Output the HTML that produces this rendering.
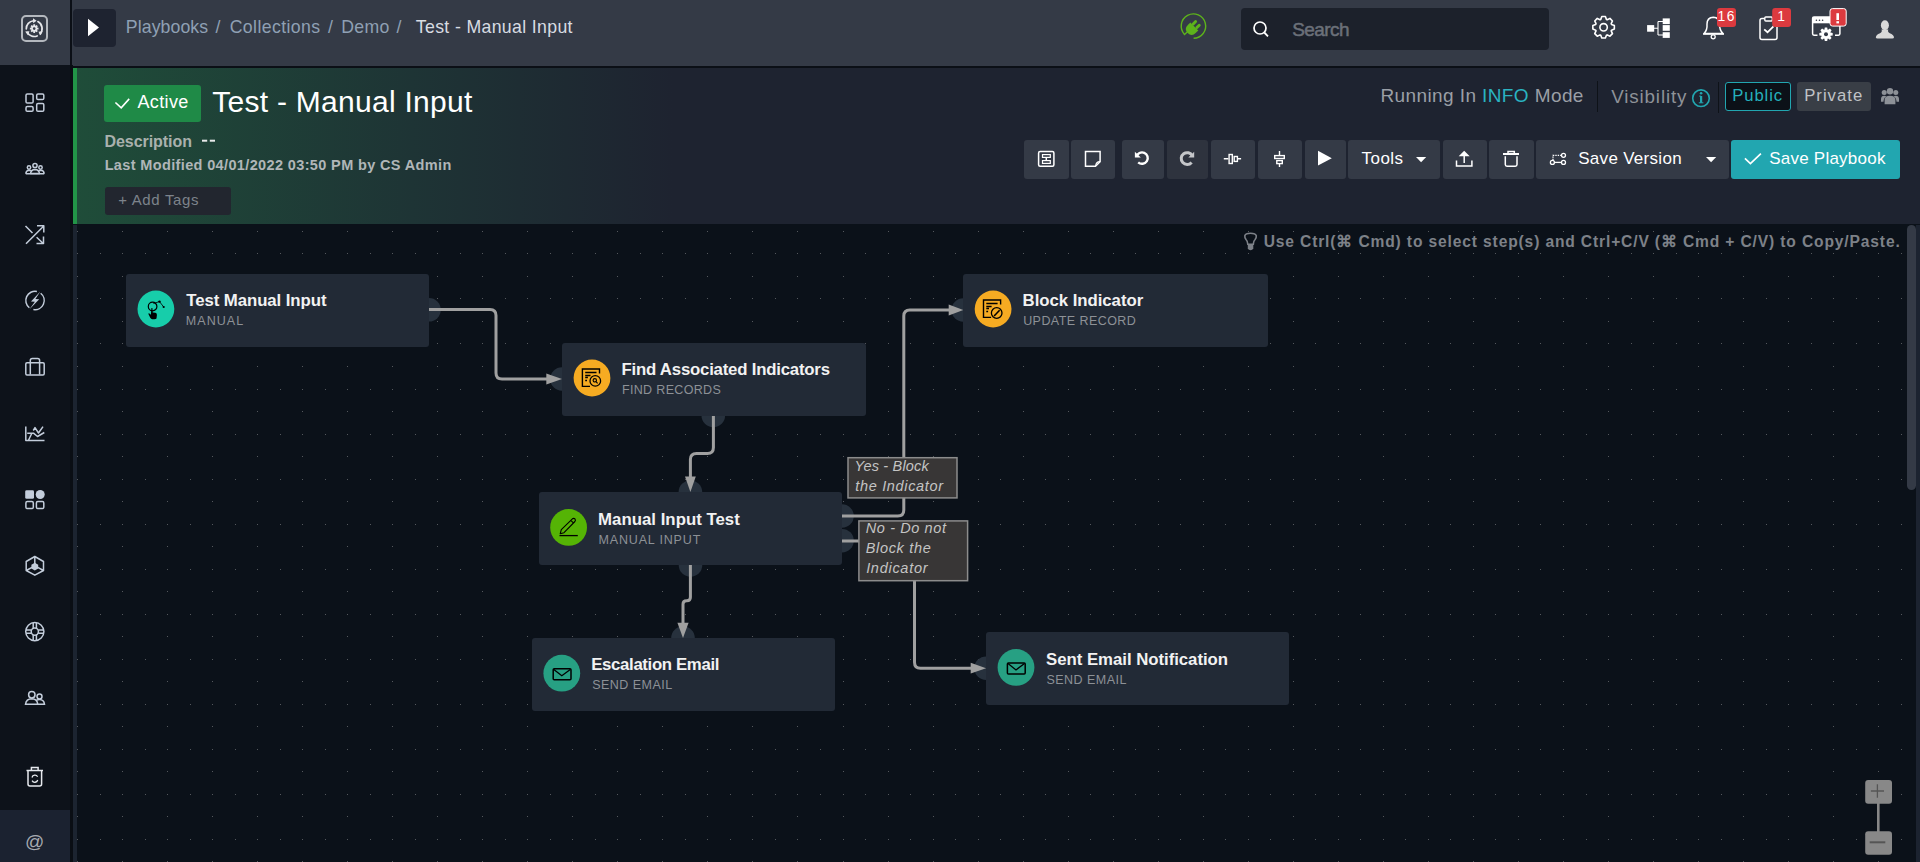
<!DOCTYPE html>
<html><head><meta charset="utf-8">
<style>
*{margin:0;padding:0;box-sizing:border-box}
html,body{width:1920px;height:862px;overflow:hidden;background:#0b1119;font-family:"Liberation Sans",sans-serif}
.a{position:absolute}
svg{position:absolute;left:0;top:0;overflow:visible}
</style></head><body>
<div class="a" style="left:0;top:0;width:1920px;height:68px;background:#343a46"></div>
<div class="a" style="left:72px;top:66px;width:1848px;height:2px;background:#0b0f16"></div>
<div class="a" style="left:70px;top:0;width:2px;height:68px;background:#0b0f16"></div>
<div class="a" style="left:0;top:65px;width:70px;height:797px;background:#0d121a"></div>
<div class="a" style="left:70px;top:65px;width:3px;height:797px;background:#0a0e14"></div>
<div class="a" style="left:0;top:810px;width:70px;height:52px;background:#1b2230"></div>
<div class="a" style="left:73px;top:68px;width:1847px;height:156px;background:linear-gradient(to right,#1f4d39 0px,#1e3435 340px,#1e2330 600px)"></div>
<div class="a" style="left:73px;top:68px;width:4px;height:156px;background:#229447"></div>
<div class="a" style="left:73px;top:225px;width:4px;height:637px;background:#1c2430"></div>
<div class="a" style="left:77px;top:225px;width:1839px;height:637px;background-color:#0b1119"></div>
<div class="a" style="left:1916px;top:225px;width:4px;height:637px;background:#1c2330"></div>
<div class="a" style="left:1907px;top:225px;width:9px;height:265px;background:#343a46;border-radius:5px"></div>
<svg width="1920" height="862" shape-rendering="crispEdges"><path fill="#55585d" d="M77 231h1v1h-1zM122 231h1v1h-1zM167 231h1v1h-1zM212 231h1v1h-1zM257 231h1v1h-1zM302 231h1v1h-1zM347 231h1v1h-1zM392 231h1v1h-1zM437 231h1v1h-1zM482 231h1v1h-1zM527 231h1v1h-1zM572 231h1v1h-1zM617 231h1v1h-1zM662 231h1v1h-1zM707 231h1v1h-1zM752 231h1v1h-1zM797 231h1v1h-1zM843 231h1v1h-1zM888 231h1v1h-1zM933 231h1v1h-1zM978 231h1v1h-1zM1023 231h1v1h-1zM1068 231h1v1h-1zM1113 231h1v1h-1zM1158 231h1v1h-1zM1203 231h1v1h-1zM1248 231h1v1h-1zM1293 231h1v1h-1zM1338 231h1v1h-1zM1383 231h1v1h-1zM1428 231h1v1h-1zM1473 231h1v1h-1zM1518 231h1v1h-1zM1563 231h1v1h-1zM1608 231h1v1h-1zM1653 231h1v1h-1zM1698 231h1v1h-1zM1743 231h1v1h-1zM1788 231h1v1h-1zM1833 231h1v1h-1zM1878 231h1v1h-1zM77 253h1v1h-1zM100 253h1v1h-1zM122 253h1v1h-1zM145 253h1v1h-1zM167 253h1v1h-1zM190 253h1v1h-1zM212 253h1v1h-1zM235 253h1v1h-1zM257 253h1v1h-1zM280 253h1v1h-1zM302 253h1v1h-1zM325 253h1v1h-1zM347 253h1v1h-1zM370 253h1v1h-1zM392 253h1v1h-1zM415 253h1v1h-1zM437 253h1v1h-1zM460 253h1v1h-1zM482 253h1v1h-1zM505 253h1v1h-1zM527 253h1v1h-1zM550 253h1v1h-1zM572 253h1v1h-1zM595 253h1v1h-1zM617 253h1v1h-1zM640 253h1v1h-1zM662 253h1v1h-1zM685 253h1v1h-1zM707 253h1v1h-1zM730 253h1v1h-1zM752 253h1v1h-1zM775 253h1v1h-1zM797 253h1v1h-1zM820 253h1v1h-1zM843 253h1v1h-1zM865 253h1v1h-1zM888 253h1v1h-1zM910 253h1v1h-1zM933 253h1v1h-1zM955 253h1v1h-1zM978 253h1v1h-1zM1000 253h1v1h-1zM1023 253h1v1h-1zM1045 253h1v1h-1zM1068 253h1v1h-1zM1090 253h1v1h-1zM1113 253h1v1h-1zM1135 253h1v1h-1zM1158 253h1v1h-1zM1180 253h1v1h-1zM1203 253h1v1h-1zM1225 253h1v1h-1zM1248 253h1v1h-1zM1270 253h1v1h-1zM1293 253h1v1h-1zM1315 253h1v1h-1zM1338 253h1v1h-1zM1360 253h1v1h-1zM1383 253h1v1h-1zM1405 253h1v1h-1zM1428 253h1v1h-1zM1450 253h1v1h-1zM1473 253h1v1h-1zM1495 253h1v1h-1zM1518 253h1v1h-1zM1540 253h1v1h-1zM1563 253h1v1h-1zM1586 253h1v1h-1zM1608 253h1v1h-1zM1631 253h1v1h-1zM1653 253h1v1h-1zM1676 253h1v1h-1zM1698 253h1v1h-1zM1721 253h1v1h-1zM1743 253h1v1h-1zM1766 253h1v1h-1zM1788 253h1v1h-1zM1811 253h1v1h-1zM1833 253h1v1h-1zM1856 253h1v1h-1zM1878 253h1v1h-1zM1901 253h1v1h-1zM77 276h1v1h-1zM122 276h1v1h-1zM167 276h1v1h-1zM212 276h1v1h-1zM257 276h1v1h-1zM302 276h1v1h-1zM347 276h1v1h-1zM392 276h1v1h-1zM437 276h1v1h-1zM482 276h1v1h-1zM527 276h1v1h-1zM572 276h1v1h-1zM617 276h1v1h-1zM662 276h1v1h-1zM707 276h1v1h-1zM752 276h1v1h-1zM797 276h1v1h-1zM843 276h1v1h-1zM888 276h1v1h-1zM933 276h1v1h-1zM978 276h1v1h-1zM1023 276h1v1h-1zM1068 276h1v1h-1zM1113 276h1v1h-1zM1158 276h1v1h-1zM1203 276h1v1h-1zM1248 276h1v1h-1zM1293 276h1v1h-1zM1338 276h1v1h-1zM1383 276h1v1h-1zM1428 276h1v1h-1zM1473 276h1v1h-1zM1518 276h1v1h-1zM1563 276h1v1h-1zM1608 276h1v1h-1zM1653 276h1v1h-1zM1698 276h1v1h-1zM1743 276h1v1h-1zM1788 276h1v1h-1zM1833 276h1v1h-1zM1878 276h1v1h-1zM77 298h1v1h-1zM100 298h1v1h-1zM122 298h1v1h-1zM145 298h1v1h-1zM167 298h1v1h-1zM190 298h1v1h-1zM212 298h1v1h-1zM235 298h1v1h-1zM257 298h1v1h-1zM280 298h1v1h-1zM302 298h1v1h-1zM325 298h1v1h-1zM347 298h1v1h-1zM370 298h1v1h-1zM392 298h1v1h-1zM415 298h1v1h-1zM437 298h1v1h-1zM460 298h1v1h-1zM482 298h1v1h-1zM505 298h1v1h-1zM527 298h1v1h-1zM550 298h1v1h-1zM572 298h1v1h-1zM595 298h1v1h-1zM617 298h1v1h-1zM640 298h1v1h-1zM662 298h1v1h-1zM685 298h1v1h-1zM707 298h1v1h-1zM730 298h1v1h-1zM752 298h1v1h-1zM775 298h1v1h-1zM797 298h1v1h-1zM820 298h1v1h-1zM843 298h1v1h-1zM865 298h1v1h-1zM888 298h1v1h-1zM910 298h1v1h-1zM933 298h1v1h-1zM955 298h1v1h-1zM978 298h1v1h-1zM1000 298h1v1h-1zM1023 298h1v1h-1zM1045 298h1v1h-1zM1068 298h1v1h-1zM1090 298h1v1h-1zM1113 298h1v1h-1zM1135 298h1v1h-1zM1158 298h1v1h-1zM1180 298h1v1h-1zM1203 298h1v1h-1zM1225 298h1v1h-1zM1248 298h1v1h-1zM1270 298h1v1h-1zM1293 298h1v1h-1zM1315 298h1v1h-1zM1338 298h1v1h-1zM1360 298h1v1h-1zM1383 298h1v1h-1zM1405 298h1v1h-1zM1428 298h1v1h-1zM1450 298h1v1h-1zM1473 298h1v1h-1zM1495 298h1v1h-1zM1518 298h1v1h-1zM1540 298h1v1h-1zM1563 298h1v1h-1zM1586 298h1v1h-1zM1608 298h1v1h-1zM1631 298h1v1h-1zM1653 298h1v1h-1zM1676 298h1v1h-1zM1698 298h1v1h-1zM1721 298h1v1h-1zM1743 298h1v1h-1zM1766 298h1v1h-1zM1788 298h1v1h-1zM1811 298h1v1h-1zM1833 298h1v1h-1zM1856 298h1v1h-1zM1878 298h1v1h-1zM1901 298h1v1h-1zM77 321h1v1h-1zM122 321h1v1h-1zM167 321h1v1h-1zM212 321h1v1h-1zM257 321h1v1h-1zM302 321h1v1h-1zM347 321h1v1h-1zM392 321h1v1h-1zM437 321h1v1h-1zM482 321h1v1h-1zM527 321h1v1h-1zM572 321h1v1h-1zM617 321h1v1h-1zM662 321h1v1h-1zM707 321h1v1h-1zM752 321h1v1h-1zM797 321h1v1h-1zM843 321h1v1h-1zM888 321h1v1h-1zM933 321h1v1h-1zM978 321h1v1h-1zM1023 321h1v1h-1zM1068 321h1v1h-1zM1113 321h1v1h-1zM1158 321h1v1h-1zM1203 321h1v1h-1zM1248 321h1v1h-1zM1293 321h1v1h-1zM1338 321h1v1h-1zM1383 321h1v1h-1zM1428 321h1v1h-1zM1473 321h1v1h-1zM1518 321h1v1h-1zM1563 321h1v1h-1zM1608 321h1v1h-1zM1653 321h1v1h-1zM1698 321h1v1h-1zM1743 321h1v1h-1zM1788 321h1v1h-1zM1833 321h1v1h-1zM1878 321h1v1h-1zM77 343h1v1h-1zM100 343h1v1h-1zM122 343h1v1h-1zM145 343h1v1h-1zM167 343h1v1h-1zM190 343h1v1h-1zM212 343h1v1h-1zM235 343h1v1h-1zM257 343h1v1h-1zM280 343h1v1h-1zM302 343h1v1h-1zM325 343h1v1h-1zM347 343h1v1h-1zM370 343h1v1h-1zM392 343h1v1h-1zM415 343h1v1h-1zM437 343h1v1h-1zM460 343h1v1h-1zM482 343h1v1h-1zM505 343h1v1h-1zM527 343h1v1h-1zM550 343h1v1h-1zM572 343h1v1h-1zM595 343h1v1h-1zM617 343h1v1h-1zM640 343h1v1h-1zM662 343h1v1h-1zM685 343h1v1h-1zM707 343h1v1h-1zM730 343h1v1h-1zM752 343h1v1h-1zM775 343h1v1h-1zM797 343h1v1h-1zM820 343h1v1h-1zM843 343h1v1h-1zM865 343h1v1h-1zM888 343h1v1h-1zM910 343h1v1h-1zM933 343h1v1h-1zM955 343h1v1h-1zM978 343h1v1h-1zM1000 343h1v1h-1zM1023 343h1v1h-1zM1045 343h1v1h-1zM1068 343h1v1h-1zM1090 343h1v1h-1zM1113 343h1v1h-1zM1135 343h1v1h-1zM1158 343h1v1h-1zM1180 343h1v1h-1zM1203 343h1v1h-1zM1225 343h1v1h-1zM1248 343h1v1h-1zM1270 343h1v1h-1zM1293 343h1v1h-1zM1315 343h1v1h-1zM1338 343h1v1h-1zM1360 343h1v1h-1zM1383 343h1v1h-1zM1405 343h1v1h-1zM1428 343h1v1h-1zM1450 343h1v1h-1zM1473 343h1v1h-1zM1495 343h1v1h-1zM1518 343h1v1h-1zM1540 343h1v1h-1zM1563 343h1v1h-1zM1586 343h1v1h-1zM1608 343h1v1h-1zM1631 343h1v1h-1zM1653 343h1v1h-1zM1676 343h1v1h-1zM1698 343h1v1h-1zM1721 343h1v1h-1zM1743 343h1v1h-1zM1766 343h1v1h-1zM1788 343h1v1h-1zM1811 343h1v1h-1zM1833 343h1v1h-1zM1856 343h1v1h-1zM1878 343h1v1h-1zM1901 343h1v1h-1zM77 366h1v1h-1zM122 366h1v1h-1zM167 366h1v1h-1zM212 366h1v1h-1zM257 366h1v1h-1zM302 366h1v1h-1zM347 366h1v1h-1zM392 366h1v1h-1zM437 366h1v1h-1zM482 366h1v1h-1zM527 366h1v1h-1zM572 366h1v1h-1zM617 366h1v1h-1zM662 366h1v1h-1zM707 366h1v1h-1zM752 366h1v1h-1zM797 366h1v1h-1zM843 366h1v1h-1zM888 366h1v1h-1zM933 366h1v1h-1zM978 366h1v1h-1zM1023 366h1v1h-1zM1068 366h1v1h-1zM1113 366h1v1h-1zM1158 366h1v1h-1zM1203 366h1v1h-1zM1248 366h1v1h-1zM1293 366h1v1h-1zM1338 366h1v1h-1zM1383 366h1v1h-1zM1428 366h1v1h-1zM1473 366h1v1h-1zM1518 366h1v1h-1zM1563 366h1v1h-1zM1608 366h1v1h-1zM1653 366h1v1h-1zM1698 366h1v1h-1zM1743 366h1v1h-1zM1788 366h1v1h-1zM1833 366h1v1h-1zM1878 366h1v1h-1zM77 389h1v1h-1zM100 389h1v1h-1zM122 389h1v1h-1zM145 389h1v1h-1zM167 389h1v1h-1zM190 389h1v1h-1zM212 389h1v1h-1zM235 389h1v1h-1zM257 389h1v1h-1zM280 389h1v1h-1zM302 389h1v1h-1zM325 389h1v1h-1zM347 389h1v1h-1zM370 389h1v1h-1zM392 389h1v1h-1zM415 389h1v1h-1zM437 389h1v1h-1zM460 389h1v1h-1zM482 389h1v1h-1zM505 389h1v1h-1zM527 389h1v1h-1zM550 389h1v1h-1zM572 389h1v1h-1zM595 389h1v1h-1zM617 389h1v1h-1zM640 389h1v1h-1zM662 389h1v1h-1zM685 389h1v1h-1zM707 389h1v1h-1zM730 389h1v1h-1zM752 389h1v1h-1zM775 389h1v1h-1zM797 389h1v1h-1zM820 389h1v1h-1zM843 389h1v1h-1zM865 389h1v1h-1zM888 389h1v1h-1zM910 389h1v1h-1zM933 389h1v1h-1zM955 389h1v1h-1zM978 389h1v1h-1zM1000 389h1v1h-1zM1023 389h1v1h-1zM1045 389h1v1h-1zM1068 389h1v1h-1zM1090 389h1v1h-1zM1113 389h1v1h-1zM1135 389h1v1h-1zM1158 389h1v1h-1zM1180 389h1v1h-1zM1203 389h1v1h-1zM1225 389h1v1h-1zM1248 389h1v1h-1zM1270 389h1v1h-1zM1293 389h1v1h-1zM1315 389h1v1h-1zM1338 389h1v1h-1zM1360 389h1v1h-1zM1383 389h1v1h-1zM1405 389h1v1h-1zM1428 389h1v1h-1zM1450 389h1v1h-1zM1473 389h1v1h-1zM1495 389h1v1h-1zM1518 389h1v1h-1zM1540 389h1v1h-1zM1563 389h1v1h-1zM1586 389h1v1h-1zM1608 389h1v1h-1zM1631 389h1v1h-1zM1653 389h1v1h-1zM1676 389h1v1h-1zM1698 389h1v1h-1zM1721 389h1v1h-1zM1743 389h1v1h-1zM1766 389h1v1h-1zM1788 389h1v1h-1zM1811 389h1v1h-1zM1833 389h1v1h-1zM1856 389h1v1h-1zM1878 389h1v1h-1zM1901 389h1v1h-1zM77 411h1v1h-1zM122 411h1v1h-1zM167 411h1v1h-1zM212 411h1v1h-1zM257 411h1v1h-1zM302 411h1v1h-1zM347 411h1v1h-1zM392 411h1v1h-1zM437 411h1v1h-1zM482 411h1v1h-1zM527 411h1v1h-1zM572 411h1v1h-1zM617 411h1v1h-1zM662 411h1v1h-1zM707 411h1v1h-1zM752 411h1v1h-1zM797 411h1v1h-1zM843 411h1v1h-1zM888 411h1v1h-1zM933 411h1v1h-1zM978 411h1v1h-1zM1023 411h1v1h-1zM1068 411h1v1h-1zM1113 411h1v1h-1zM1158 411h1v1h-1zM1203 411h1v1h-1zM1248 411h1v1h-1zM1293 411h1v1h-1zM1338 411h1v1h-1zM1383 411h1v1h-1zM1428 411h1v1h-1zM1473 411h1v1h-1zM1518 411h1v1h-1zM1563 411h1v1h-1zM1608 411h1v1h-1zM1653 411h1v1h-1zM1698 411h1v1h-1zM1743 411h1v1h-1zM1788 411h1v1h-1zM1833 411h1v1h-1zM1878 411h1v1h-1zM77 434h1v1h-1zM100 434h1v1h-1zM122 434h1v1h-1zM145 434h1v1h-1zM167 434h1v1h-1zM190 434h1v1h-1zM212 434h1v1h-1zM235 434h1v1h-1zM257 434h1v1h-1zM280 434h1v1h-1zM302 434h1v1h-1zM325 434h1v1h-1zM347 434h1v1h-1zM370 434h1v1h-1zM392 434h1v1h-1zM415 434h1v1h-1zM437 434h1v1h-1zM460 434h1v1h-1zM482 434h1v1h-1zM505 434h1v1h-1zM527 434h1v1h-1zM550 434h1v1h-1zM572 434h1v1h-1zM595 434h1v1h-1zM617 434h1v1h-1zM640 434h1v1h-1zM662 434h1v1h-1zM685 434h1v1h-1zM707 434h1v1h-1zM730 434h1v1h-1zM752 434h1v1h-1zM775 434h1v1h-1zM797 434h1v1h-1zM820 434h1v1h-1zM843 434h1v1h-1zM865 434h1v1h-1zM888 434h1v1h-1zM910 434h1v1h-1zM933 434h1v1h-1zM955 434h1v1h-1zM978 434h1v1h-1zM1000 434h1v1h-1zM1023 434h1v1h-1zM1045 434h1v1h-1zM1068 434h1v1h-1zM1090 434h1v1h-1zM1113 434h1v1h-1zM1135 434h1v1h-1zM1158 434h1v1h-1zM1180 434h1v1h-1zM1203 434h1v1h-1zM1225 434h1v1h-1zM1248 434h1v1h-1zM1270 434h1v1h-1zM1293 434h1v1h-1zM1315 434h1v1h-1zM1338 434h1v1h-1zM1360 434h1v1h-1zM1383 434h1v1h-1zM1405 434h1v1h-1zM1428 434h1v1h-1zM1450 434h1v1h-1zM1473 434h1v1h-1zM1495 434h1v1h-1zM1518 434h1v1h-1zM1540 434h1v1h-1zM1563 434h1v1h-1zM1586 434h1v1h-1zM1608 434h1v1h-1zM1631 434h1v1h-1zM1653 434h1v1h-1zM1676 434h1v1h-1zM1698 434h1v1h-1zM1721 434h1v1h-1zM1743 434h1v1h-1zM1766 434h1v1h-1zM1788 434h1v1h-1zM1811 434h1v1h-1zM1833 434h1v1h-1zM1856 434h1v1h-1zM1878 434h1v1h-1zM1901 434h1v1h-1zM77 456h1v1h-1zM122 456h1v1h-1zM167 456h1v1h-1zM212 456h1v1h-1zM257 456h1v1h-1zM302 456h1v1h-1zM347 456h1v1h-1zM392 456h1v1h-1zM437 456h1v1h-1zM482 456h1v1h-1zM527 456h1v1h-1zM572 456h1v1h-1zM617 456h1v1h-1zM662 456h1v1h-1zM707 456h1v1h-1zM752 456h1v1h-1zM797 456h1v1h-1zM843 456h1v1h-1zM888 456h1v1h-1zM933 456h1v1h-1zM978 456h1v1h-1zM1023 456h1v1h-1zM1068 456h1v1h-1zM1113 456h1v1h-1zM1158 456h1v1h-1zM1203 456h1v1h-1zM1248 456h1v1h-1zM1293 456h1v1h-1zM1338 456h1v1h-1zM1383 456h1v1h-1zM1428 456h1v1h-1zM1473 456h1v1h-1zM1518 456h1v1h-1zM1563 456h1v1h-1zM1608 456h1v1h-1zM1653 456h1v1h-1zM1698 456h1v1h-1zM1743 456h1v1h-1zM1788 456h1v1h-1zM1833 456h1v1h-1zM1878 456h1v1h-1zM77 479h1v1h-1zM100 479h1v1h-1zM122 479h1v1h-1zM145 479h1v1h-1zM167 479h1v1h-1zM190 479h1v1h-1zM212 479h1v1h-1zM235 479h1v1h-1zM257 479h1v1h-1zM280 479h1v1h-1zM302 479h1v1h-1zM325 479h1v1h-1zM347 479h1v1h-1zM370 479h1v1h-1zM392 479h1v1h-1zM415 479h1v1h-1zM437 479h1v1h-1zM460 479h1v1h-1zM482 479h1v1h-1zM505 479h1v1h-1zM527 479h1v1h-1zM550 479h1v1h-1zM572 479h1v1h-1zM595 479h1v1h-1zM617 479h1v1h-1zM640 479h1v1h-1zM662 479h1v1h-1zM685 479h1v1h-1zM707 479h1v1h-1zM730 479h1v1h-1zM752 479h1v1h-1zM775 479h1v1h-1zM797 479h1v1h-1zM820 479h1v1h-1zM843 479h1v1h-1zM865 479h1v1h-1zM888 479h1v1h-1zM910 479h1v1h-1zM933 479h1v1h-1zM955 479h1v1h-1zM978 479h1v1h-1zM1000 479h1v1h-1zM1023 479h1v1h-1zM1045 479h1v1h-1zM1068 479h1v1h-1zM1090 479h1v1h-1zM1113 479h1v1h-1zM1135 479h1v1h-1zM1158 479h1v1h-1zM1180 479h1v1h-1zM1203 479h1v1h-1zM1225 479h1v1h-1zM1248 479h1v1h-1zM1270 479h1v1h-1zM1293 479h1v1h-1zM1315 479h1v1h-1zM1338 479h1v1h-1zM1360 479h1v1h-1zM1383 479h1v1h-1zM1405 479h1v1h-1zM1428 479h1v1h-1zM1450 479h1v1h-1zM1473 479h1v1h-1zM1495 479h1v1h-1zM1518 479h1v1h-1zM1540 479h1v1h-1zM1563 479h1v1h-1zM1586 479h1v1h-1zM1608 479h1v1h-1zM1631 479h1v1h-1zM1653 479h1v1h-1zM1676 479h1v1h-1zM1698 479h1v1h-1zM1721 479h1v1h-1zM1743 479h1v1h-1zM1766 479h1v1h-1zM1788 479h1v1h-1zM1811 479h1v1h-1zM1833 479h1v1h-1zM1856 479h1v1h-1zM1878 479h1v1h-1zM1901 479h1v1h-1zM77 501h1v1h-1zM122 501h1v1h-1zM167 501h1v1h-1zM212 501h1v1h-1zM257 501h1v1h-1zM302 501h1v1h-1zM347 501h1v1h-1zM392 501h1v1h-1zM437 501h1v1h-1zM482 501h1v1h-1zM527 501h1v1h-1zM572 501h1v1h-1zM617 501h1v1h-1zM662 501h1v1h-1zM707 501h1v1h-1zM752 501h1v1h-1zM797 501h1v1h-1zM843 501h1v1h-1zM888 501h1v1h-1zM933 501h1v1h-1zM978 501h1v1h-1zM1023 501h1v1h-1zM1068 501h1v1h-1zM1113 501h1v1h-1zM1158 501h1v1h-1zM1203 501h1v1h-1zM1248 501h1v1h-1zM1293 501h1v1h-1zM1338 501h1v1h-1zM1383 501h1v1h-1zM1428 501h1v1h-1zM1473 501h1v1h-1zM1518 501h1v1h-1zM1563 501h1v1h-1zM1608 501h1v1h-1zM1653 501h1v1h-1zM1698 501h1v1h-1zM1743 501h1v1h-1zM1788 501h1v1h-1zM1833 501h1v1h-1zM1878 501h1v1h-1zM77 524h1v1h-1zM100 524h1v1h-1zM122 524h1v1h-1zM145 524h1v1h-1zM167 524h1v1h-1zM190 524h1v1h-1zM212 524h1v1h-1zM235 524h1v1h-1zM257 524h1v1h-1zM280 524h1v1h-1zM302 524h1v1h-1zM325 524h1v1h-1zM347 524h1v1h-1zM370 524h1v1h-1zM392 524h1v1h-1zM415 524h1v1h-1zM437 524h1v1h-1zM460 524h1v1h-1zM482 524h1v1h-1zM505 524h1v1h-1zM527 524h1v1h-1zM550 524h1v1h-1zM572 524h1v1h-1zM595 524h1v1h-1zM617 524h1v1h-1zM640 524h1v1h-1zM662 524h1v1h-1zM685 524h1v1h-1zM707 524h1v1h-1zM730 524h1v1h-1zM752 524h1v1h-1zM775 524h1v1h-1zM797 524h1v1h-1zM820 524h1v1h-1zM843 524h1v1h-1zM865 524h1v1h-1zM888 524h1v1h-1zM910 524h1v1h-1zM933 524h1v1h-1zM955 524h1v1h-1zM978 524h1v1h-1zM1000 524h1v1h-1zM1023 524h1v1h-1zM1045 524h1v1h-1zM1068 524h1v1h-1zM1090 524h1v1h-1zM1113 524h1v1h-1zM1135 524h1v1h-1zM1158 524h1v1h-1zM1180 524h1v1h-1zM1203 524h1v1h-1zM1225 524h1v1h-1zM1248 524h1v1h-1zM1270 524h1v1h-1zM1293 524h1v1h-1zM1315 524h1v1h-1zM1338 524h1v1h-1zM1360 524h1v1h-1zM1383 524h1v1h-1zM1405 524h1v1h-1zM1428 524h1v1h-1zM1450 524h1v1h-1zM1473 524h1v1h-1zM1495 524h1v1h-1zM1518 524h1v1h-1zM1540 524h1v1h-1zM1563 524h1v1h-1zM1586 524h1v1h-1zM1608 524h1v1h-1zM1631 524h1v1h-1zM1653 524h1v1h-1zM1676 524h1v1h-1zM1698 524h1v1h-1zM1721 524h1v1h-1zM1743 524h1v1h-1zM1766 524h1v1h-1zM1788 524h1v1h-1zM1811 524h1v1h-1zM1833 524h1v1h-1zM1856 524h1v1h-1zM1878 524h1v1h-1zM1901 524h1v1h-1zM77 546h1v1h-1zM122 546h1v1h-1zM167 546h1v1h-1zM212 546h1v1h-1zM257 546h1v1h-1zM302 546h1v1h-1zM347 546h1v1h-1zM392 546h1v1h-1zM437 546h1v1h-1zM482 546h1v1h-1zM527 546h1v1h-1zM572 546h1v1h-1zM617 546h1v1h-1zM662 546h1v1h-1zM707 546h1v1h-1zM752 546h1v1h-1zM797 546h1v1h-1zM843 546h1v1h-1zM888 546h1v1h-1zM933 546h1v1h-1zM978 546h1v1h-1zM1023 546h1v1h-1zM1068 546h1v1h-1zM1113 546h1v1h-1zM1158 546h1v1h-1zM1203 546h1v1h-1zM1248 546h1v1h-1zM1293 546h1v1h-1zM1338 546h1v1h-1zM1383 546h1v1h-1zM1428 546h1v1h-1zM1473 546h1v1h-1zM1518 546h1v1h-1zM1563 546h1v1h-1zM1608 546h1v1h-1zM1653 546h1v1h-1zM1698 546h1v1h-1zM1743 546h1v1h-1zM1788 546h1v1h-1zM1833 546h1v1h-1zM1878 546h1v1h-1zM77 569h1v1h-1zM100 569h1v1h-1zM122 569h1v1h-1zM145 569h1v1h-1zM167 569h1v1h-1zM190 569h1v1h-1zM212 569h1v1h-1zM235 569h1v1h-1zM257 569h1v1h-1zM280 569h1v1h-1zM302 569h1v1h-1zM325 569h1v1h-1zM347 569h1v1h-1zM370 569h1v1h-1zM392 569h1v1h-1zM415 569h1v1h-1zM437 569h1v1h-1zM460 569h1v1h-1zM482 569h1v1h-1zM505 569h1v1h-1zM527 569h1v1h-1zM550 569h1v1h-1zM572 569h1v1h-1zM595 569h1v1h-1zM617 569h1v1h-1zM640 569h1v1h-1zM662 569h1v1h-1zM685 569h1v1h-1zM707 569h1v1h-1zM730 569h1v1h-1zM752 569h1v1h-1zM775 569h1v1h-1zM797 569h1v1h-1zM820 569h1v1h-1zM843 569h1v1h-1zM865 569h1v1h-1zM888 569h1v1h-1zM910 569h1v1h-1zM933 569h1v1h-1zM955 569h1v1h-1zM978 569h1v1h-1zM1000 569h1v1h-1zM1023 569h1v1h-1zM1045 569h1v1h-1zM1068 569h1v1h-1zM1090 569h1v1h-1zM1113 569h1v1h-1zM1135 569h1v1h-1zM1158 569h1v1h-1zM1180 569h1v1h-1zM1203 569h1v1h-1zM1225 569h1v1h-1zM1248 569h1v1h-1zM1270 569h1v1h-1zM1293 569h1v1h-1zM1315 569h1v1h-1zM1338 569h1v1h-1zM1360 569h1v1h-1zM1383 569h1v1h-1zM1405 569h1v1h-1zM1428 569h1v1h-1zM1450 569h1v1h-1zM1473 569h1v1h-1zM1495 569h1v1h-1zM1518 569h1v1h-1zM1540 569h1v1h-1zM1563 569h1v1h-1zM1586 569h1v1h-1zM1608 569h1v1h-1zM1631 569h1v1h-1zM1653 569h1v1h-1zM1676 569h1v1h-1zM1698 569h1v1h-1zM1721 569h1v1h-1zM1743 569h1v1h-1zM1766 569h1v1h-1zM1788 569h1v1h-1zM1811 569h1v1h-1zM1833 569h1v1h-1zM1856 569h1v1h-1zM1878 569h1v1h-1zM1901 569h1v1h-1zM77 591h1v1h-1zM122 591h1v1h-1zM167 591h1v1h-1zM212 591h1v1h-1zM257 591h1v1h-1zM302 591h1v1h-1zM347 591h1v1h-1zM392 591h1v1h-1zM437 591h1v1h-1zM482 591h1v1h-1zM527 591h1v1h-1zM572 591h1v1h-1zM617 591h1v1h-1zM662 591h1v1h-1zM707 591h1v1h-1zM752 591h1v1h-1zM797 591h1v1h-1zM843 591h1v1h-1zM888 591h1v1h-1zM933 591h1v1h-1zM978 591h1v1h-1zM1023 591h1v1h-1zM1068 591h1v1h-1zM1113 591h1v1h-1zM1158 591h1v1h-1zM1203 591h1v1h-1zM1248 591h1v1h-1zM1293 591h1v1h-1zM1338 591h1v1h-1zM1383 591h1v1h-1zM1428 591h1v1h-1zM1473 591h1v1h-1zM1518 591h1v1h-1zM1563 591h1v1h-1zM1608 591h1v1h-1zM1653 591h1v1h-1zM1698 591h1v1h-1zM1743 591h1v1h-1zM1788 591h1v1h-1zM1833 591h1v1h-1zM1878 591h1v1h-1zM77 614h1v1h-1zM100 614h1v1h-1zM122 614h1v1h-1zM145 614h1v1h-1zM167 614h1v1h-1zM190 614h1v1h-1zM212 614h1v1h-1zM235 614h1v1h-1zM257 614h1v1h-1zM280 614h1v1h-1zM302 614h1v1h-1zM325 614h1v1h-1zM347 614h1v1h-1zM370 614h1v1h-1zM392 614h1v1h-1zM415 614h1v1h-1zM437 614h1v1h-1zM460 614h1v1h-1zM482 614h1v1h-1zM505 614h1v1h-1zM527 614h1v1h-1zM550 614h1v1h-1zM572 614h1v1h-1zM595 614h1v1h-1zM617 614h1v1h-1zM640 614h1v1h-1zM662 614h1v1h-1zM685 614h1v1h-1zM707 614h1v1h-1zM730 614h1v1h-1zM752 614h1v1h-1zM775 614h1v1h-1zM797 614h1v1h-1zM820 614h1v1h-1zM843 614h1v1h-1zM865 614h1v1h-1zM888 614h1v1h-1zM910 614h1v1h-1zM933 614h1v1h-1zM955 614h1v1h-1zM978 614h1v1h-1zM1000 614h1v1h-1zM1023 614h1v1h-1zM1045 614h1v1h-1zM1068 614h1v1h-1zM1090 614h1v1h-1zM1113 614h1v1h-1zM1135 614h1v1h-1zM1158 614h1v1h-1zM1180 614h1v1h-1zM1203 614h1v1h-1zM1225 614h1v1h-1zM1248 614h1v1h-1zM1270 614h1v1h-1zM1293 614h1v1h-1zM1315 614h1v1h-1zM1338 614h1v1h-1zM1360 614h1v1h-1zM1383 614h1v1h-1zM1405 614h1v1h-1zM1428 614h1v1h-1zM1450 614h1v1h-1zM1473 614h1v1h-1zM1495 614h1v1h-1zM1518 614h1v1h-1zM1540 614h1v1h-1zM1563 614h1v1h-1zM1586 614h1v1h-1zM1608 614h1v1h-1zM1631 614h1v1h-1zM1653 614h1v1h-1zM1676 614h1v1h-1zM1698 614h1v1h-1zM1721 614h1v1h-1zM1743 614h1v1h-1zM1766 614h1v1h-1zM1788 614h1v1h-1zM1811 614h1v1h-1zM1833 614h1v1h-1zM1856 614h1v1h-1zM1878 614h1v1h-1zM1901 614h1v1h-1zM77 636h1v1h-1zM122 636h1v1h-1zM167 636h1v1h-1zM212 636h1v1h-1zM257 636h1v1h-1zM302 636h1v1h-1zM347 636h1v1h-1zM392 636h1v1h-1zM437 636h1v1h-1zM482 636h1v1h-1zM527 636h1v1h-1zM572 636h1v1h-1zM617 636h1v1h-1zM662 636h1v1h-1zM707 636h1v1h-1zM752 636h1v1h-1zM797 636h1v1h-1zM843 636h1v1h-1zM888 636h1v1h-1zM933 636h1v1h-1zM978 636h1v1h-1zM1023 636h1v1h-1zM1068 636h1v1h-1zM1113 636h1v1h-1zM1158 636h1v1h-1zM1203 636h1v1h-1zM1248 636h1v1h-1zM1293 636h1v1h-1zM1338 636h1v1h-1zM1383 636h1v1h-1zM1428 636h1v1h-1zM1473 636h1v1h-1zM1518 636h1v1h-1zM1563 636h1v1h-1zM1608 636h1v1h-1zM1653 636h1v1h-1zM1698 636h1v1h-1zM1743 636h1v1h-1zM1788 636h1v1h-1zM1833 636h1v1h-1zM1878 636h1v1h-1zM77 659h1v1h-1zM100 659h1v1h-1zM122 659h1v1h-1zM145 659h1v1h-1zM167 659h1v1h-1zM190 659h1v1h-1zM212 659h1v1h-1zM235 659h1v1h-1zM257 659h1v1h-1zM280 659h1v1h-1zM302 659h1v1h-1zM325 659h1v1h-1zM347 659h1v1h-1zM370 659h1v1h-1zM392 659h1v1h-1zM415 659h1v1h-1zM437 659h1v1h-1zM460 659h1v1h-1zM482 659h1v1h-1zM505 659h1v1h-1zM527 659h1v1h-1zM550 659h1v1h-1zM572 659h1v1h-1zM595 659h1v1h-1zM617 659h1v1h-1zM640 659h1v1h-1zM662 659h1v1h-1zM685 659h1v1h-1zM707 659h1v1h-1zM730 659h1v1h-1zM752 659h1v1h-1zM775 659h1v1h-1zM797 659h1v1h-1zM820 659h1v1h-1zM843 659h1v1h-1zM865 659h1v1h-1zM888 659h1v1h-1zM910 659h1v1h-1zM933 659h1v1h-1zM955 659h1v1h-1zM978 659h1v1h-1zM1000 659h1v1h-1zM1023 659h1v1h-1zM1045 659h1v1h-1zM1068 659h1v1h-1zM1090 659h1v1h-1zM1113 659h1v1h-1zM1135 659h1v1h-1zM1158 659h1v1h-1zM1180 659h1v1h-1zM1203 659h1v1h-1zM1225 659h1v1h-1zM1248 659h1v1h-1zM1270 659h1v1h-1zM1293 659h1v1h-1zM1315 659h1v1h-1zM1338 659h1v1h-1zM1360 659h1v1h-1zM1383 659h1v1h-1zM1405 659h1v1h-1zM1428 659h1v1h-1zM1450 659h1v1h-1zM1473 659h1v1h-1zM1495 659h1v1h-1zM1518 659h1v1h-1zM1540 659h1v1h-1zM1563 659h1v1h-1zM1586 659h1v1h-1zM1608 659h1v1h-1zM1631 659h1v1h-1zM1653 659h1v1h-1zM1676 659h1v1h-1zM1698 659h1v1h-1zM1721 659h1v1h-1zM1743 659h1v1h-1zM1766 659h1v1h-1zM1788 659h1v1h-1zM1811 659h1v1h-1zM1833 659h1v1h-1zM1856 659h1v1h-1zM1878 659h1v1h-1zM1901 659h1v1h-1zM77 681h1v1h-1zM122 681h1v1h-1zM167 681h1v1h-1zM212 681h1v1h-1zM257 681h1v1h-1zM302 681h1v1h-1zM347 681h1v1h-1zM392 681h1v1h-1zM437 681h1v1h-1zM482 681h1v1h-1zM527 681h1v1h-1zM572 681h1v1h-1zM617 681h1v1h-1zM662 681h1v1h-1zM707 681h1v1h-1zM752 681h1v1h-1zM797 681h1v1h-1zM843 681h1v1h-1zM888 681h1v1h-1zM933 681h1v1h-1zM978 681h1v1h-1zM1023 681h1v1h-1zM1068 681h1v1h-1zM1113 681h1v1h-1zM1158 681h1v1h-1zM1203 681h1v1h-1zM1248 681h1v1h-1zM1293 681h1v1h-1zM1338 681h1v1h-1zM1383 681h1v1h-1zM1428 681h1v1h-1zM1473 681h1v1h-1zM1518 681h1v1h-1zM1563 681h1v1h-1zM1608 681h1v1h-1zM1653 681h1v1h-1zM1698 681h1v1h-1zM1743 681h1v1h-1zM1788 681h1v1h-1zM1833 681h1v1h-1zM1878 681h1v1h-1zM77 704h1v1h-1zM100 704h1v1h-1zM122 704h1v1h-1zM145 704h1v1h-1zM167 704h1v1h-1zM190 704h1v1h-1zM212 704h1v1h-1zM235 704h1v1h-1zM257 704h1v1h-1zM280 704h1v1h-1zM302 704h1v1h-1zM325 704h1v1h-1zM347 704h1v1h-1zM370 704h1v1h-1zM392 704h1v1h-1zM415 704h1v1h-1zM437 704h1v1h-1zM460 704h1v1h-1zM482 704h1v1h-1zM505 704h1v1h-1zM527 704h1v1h-1zM550 704h1v1h-1zM572 704h1v1h-1zM595 704h1v1h-1zM617 704h1v1h-1zM640 704h1v1h-1zM662 704h1v1h-1zM685 704h1v1h-1zM707 704h1v1h-1zM730 704h1v1h-1zM752 704h1v1h-1zM775 704h1v1h-1zM797 704h1v1h-1zM820 704h1v1h-1zM843 704h1v1h-1zM865 704h1v1h-1zM888 704h1v1h-1zM910 704h1v1h-1zM933 704h1v1h-1zM955 704h1v1h-1zM978 704h1v1h-1zM1000 704h1v1h-1zM1023 704h1v1h-1zM1045 704h1v1h-1zM1068 704h1v1h-1zM1090 704h1v1h-1zM1113 704h1v1h-1zM1135 704h1v1h-1zM1158 704h1v1h-1zM1180 704h1v1h-1zM1203 704h1v1h-1zM1225 704h1v1h-1zM1248 704h1v1h-1zM1270 704h1v1h-1zM1293 704h1v1h-1zM1315 704h1v1h-1zM1338 704h1v1h-1zM1360 704h1v1h-1zM1383 704h1v1h-1zM1405 704h1v1h-1zM1428 704h1v1h-1zM1450 704h1v1h-1zM1473 704h1v1h-1zM1495 704h1v1h-1zM1518 704h1v1h-1zM1540 704h1v1h-1zM1563 704h1v1h-1zM1586 704h1v1h-1zM1608 704h1v1h-1zM1631 704h1v1h-1zM1653 704h1v1h-1zM1676 704h1v1h-1zM1698 704h1v1h-1zM1721 704h1v1h-1zM1743 704h1v1h-1zM1766 704h1v1h-1zM1788 704h1v1h-1zM1811 704h1v1h-1zM1833 704h1v1h-1zM1856 704h1v1h-1zM1878 704h1v1h-1zM1901 704h1v1h-1zM77 726h1v1h-1zM122 726h1v1h-1zM167 726h1v1h-1zM212 726h1v1h-1zM257 726h1v1h-1zM302 726h1v1h-1zM347 726h1v1h-1zM392 726h1v1h-1zM437 726h1v1h-1zM482 726h1v1h-1zM527 726h1v1h-1zM572 726h1v1h-1zM617 726h1v1h-1zM662 726h1v1h-1zM707 726h1v1h-1zM752 726h1v1h-1zM797 726h1v1h-1zM843 726h1v1h-1zM888 726h1v1h-1zM933 726h1v1h-1zM978 726h1v1h-1zM1023 726h1v1h-1zM1068 726h1v1h-1zM1113 726h1v1h-1zM1158 726h1v1h-1zM1203 726h1v1h-1zM1248 726h1v1h-1zM1293 726h1v1h-1zM1338 726h1v1h-1zM1383 726h1v1h-1zM1428 726h1v1h-1zM1473 726h1v1h-1zM1518 726h1v1h-1zM1563 726h1v1h-1zM1608 726h1v1h-1zM1653 726h1v1h-1zM1698 726h1v1h-1zM1743 726h1v1h-1zM1788 726h1v1h-1zM1833 726h1v1h-1zM1878 726h1v1h-1zM77 749h1v1h-1zM100 749h1v1h-1zM122 749h1v1h-1zM145 749h1v1h-1zM167 749h1v1h-1zM190 749h1v1h-1zM212 749h1v1h-1zM235 749h1v1h-1zM257 749h1v1h-1zM280 749h1v1h-1zM302 749h1v1h-1zM325 749h1v1h-1zM347 749h1v1h-1zM370 749h1v1h-1zM392 749h1v1h-1zM415 749h1v1h-1zM437 749h1v1h-1zM460 749h1v1h-1zM482 749h1v1h-1zM505 749h1v1h-1zM527 749h1v1h-1zM550 749h1v1h-1zM572 749h1v1h-1zM595 749h1v1h-1zM617 749h1v1h-1zM640 749h1v1h-1zM662 749h1v1h-1zM685 749h1v1h-1zM707 749h1v1h-1zM730 749h1v1h-1zM752 749h1v1h-1zM775 749h1v1h-1zM797 749h1v1h-1zM820 749h1v1h-1zM843 749h1v1h-1zM865 749h1v1h-1zM888 749h1v1h-1zM910 749h1v1h-1zM933 749h1v1h-1zM955 749h1v1h-1zM978 749h1v1h-1zM1000 749h1v1h-1zM1023 749h1v1h-1zM1045 749h1v1h-1zM1068 749h1v1h-1zM1090 749h1v1h-1zM1113 749h1v1h-1zM1135 749h1v1h-1zM1158 749h1v1h-1zM1180 749h1v1h-1zM1203 749h1v1h-1zM1225 749h1v1h-1zM1248 749h1v1h-1zM1270 749h1v1h-1zM1293 749h1v1h-1zM1315 749h1v1h-1zM1338 749h1v1h-1zM1360 749h1v1h-1zM1383 749h1v1h-1zM1405 749h1v1h-1zM1428 749h1v1h-1zM1450 749h1v1h-1zM1473 749h1v1h-1zM1495 749h1v1h-1zM1518 749h1v1h-1zM1540 749h1v1h-1zM1563 749h1v1h-1zM1586 749h1v1h-1zM1608 749h1v1h-1zM1631 749h1v1h-1zM1653 749h1v1h-1zM1676 749h1v1h-1zM1698 749h1v1h-1zM1721 749h1v1h-1zM1743 749h1v1h-1zM1766 749h1v1h-1zM1788 749h1v1h-1zM1811 749h1v1h-1zM1833 749h1v1h-1zM1856 749h1v1h-1zM1878 749h1v1h-1zM1901 749h1v1h-1zM77 771h1v1h-1zM122 771h1v1h-1zM167 771h1v1h-1zM212 771h1v1h-1zM257 771h1v1h-1zM302 771h1v1h-1zM347 771h1v1h-1zM392 771h1v1h-1zM437 771h1v1h-1zM482 771h1v1h-1zM527 771h1v1h-1zM572 771h1v1h-1zM617 771h1v1h-1zM662 771h1v1h-1zM707 771h1v1h-1zM752 771h1v1h-1zM797 771h1v1h-1zM843 771h1v1h-1zM888 771h1v1h-1zM933 771h1v1h-1zM978 771h1v1h-1zM1023 771h1v1h-1zM1068 771h1v1h-1zM1113 771h1v1h-1zM1158 771h1v1h-1zM1203 771h1v1h-1zM1248 771h1v1h-1zM1293 771h1v1h-1zM1338 771h1v1h-1zM1383 771h1v1h-1zM1428 771h1v1h-1zM1473 771h1v1h-1zM1518 771h1v1h-1zM1563 771h1v1h-1zM1608 771h1v1h-1zM1653 771h1v1h-1zM1698 771h1v1h-1zM1743 771h1v1h-1zM1788 771h1v1h-1zM1833 771h1v1h-1zM1878 771h1v1h-1zM77 794h1v1h-1zM100 794h1v1h-1zM122 794h1v1h-1zM145 794h1v1h-1zM167 794h1v1h-1zM190 794h1v1h-1zM212 794h1v1h-1zM235 794h1v1h-1zM257 794h1v1h-1zM280 794h1v1h-1zM302 794h1v1h-1zM325 794h1v1h-1zM347 794h1v1h-1zM370 794h1v1h-1zM392 794h1v1h-1zM415 794h1v1h-1zM437 794h1v1h-1zM460 794h1v1h-1zM482 794h1v1h-1zM505 794h1v1h-1zM527 794h1v1h-1zM550 794h1v1h-1zM572 794h1v1h-1zM595 794h1v1h-1zM617 794h1v1h-1zM640 794h1v1h-1zM662 794h1v1h-1zM685 794h1v1h-1zM707 794h1v1h-1zM730 794h1v1h-1zM752 794h1v1h-1zM775 794h1v1h-1zM797 794h1v1h-1zM820 794h1v1h-1zM843 794h1v1h-1zM865 794h1v1h-1zM888 794h1v1h-1zM910 794h1v1h-1zM933 794h1v1h-1zM955 794h1v1h-1zM978 794h1v1h-1zM1000 794h1v1h-1zM1023 794h1v1h-1zM1045 794h1v1h-1zM1068 794h1v1h-1zM1090 794h1v1h-1zM1113 794h1v1h-1zM1135 794h1v1h-1zM1158 794h1v1h-1zM1180 794h1v1h-1zM1203 794h1v1h-1zM1225 794h1v1h-1zM1248 794h1v1h-1zM1270 794h1v1h-1zM1293 794h1v1h-1zM1315 794h1v1h-1zM1338 794h1v1h-1zM1360 794h1v1h-1zM1383 794h1v1h-1zM1405 794h1v1h-1zM1428 794h1v1h-1zM1450 794h1v1h-1zM1473 794h1v1h-1zM1495 794h1v1h-1zM1518 794h1v1h-1zM1540 794h1v1h-1zM1563 794h1v1h-1zM1586 794h1v1h-1zM1608 794h1v1h-1zM1631 794h1v1h-1zM1653 794h1v1h-1zM1676 794h1v1h-1zM1698 794h1v1h-1zM1721 794h1v1h-1zM1743 794h1v1h-1zM1766 794h1v1h-1zM1788 794h1v1h-1zM1811 794h1v1h-1zM1833 794h1v1h-1zM1856 794h1v1h-1zM1878 794h1v1h-1zM1901 794h1v1h-1zM77 816h1v1h-1zM122 816h1v1h-1zM167 816h1v1h-1zM212 816h1v1h-1zM257 816h1v1h-1zM302 816h1v1h-1zM347 816h1v1h-1zM392 816h1v1h-1zM437 816h1v1h-1zM482 816h1v1h-1zM527 816h1v1h-1zM572 816h1v1h-1zM617 816h1v1h-1zM662 816h1v1h-1zM707 816h1v1h-1zM752 816h1v1h-1zM797 816h1v1h-1zM843 816h1v1h-1zM888 816h1v1h-1zM933 816h1v1h-1zM978 816h1v1h-1zM1023 816h1v1h-1zM1068 816h1v1h-1zM1113 816h1v1h-1zM1158 816h1v1h-1zM1203 816h1v1h-1zM1248 816h1v1h-1zM1293 816h1v1h-1zM1338 816h1v1h-1zM1383 816h1v1h-1zM1428 816h1v1h-1zM1473 816h1v1h-1zM1518 816h1v1h-1zM1563 816h1v1h-1zM1608 816h1v1h-1zM1653 816h1v1h-1zM1698 816h1v1h-1zM1743 816h1v1h-1zM1788 816h1v1h-1zM1833 816h1v1h-1zM1878 816h1v1h-1zM77 839h1v1h-1zM100 839h1v1h-1zM122 839h1v1h-1zM145 839h1v1h-1zM167 839h1v1h-1zM190 839h1v1h-1zM212 839h1v1h-1zM235 839h1v1h-1zM257 839h1v1h-1zM280 839h1v1h-1zM302 839h1v1h-1zM325 839h1v1h-1zM347 839h1v1h-1zM370 839h1v1h-1zM392 839h1v1h-1zM415 839h1v1h-1zM437 839h1v1h-1zM460 839h1v1h-1zM482 839h1v1h-1zM505 839h1v1h-1zM527 839h1v1h-1zM550 839h1v1h-1zM572 839h1v1h-1zM595 839h1v1h-1zM617 839h1v1h-1zM640 839h1v1h-1zM662 839h1v1h-1zM685 839h1v1h-1zM707 839h1v1h-1zM730 839h1v1h-1zM752 839h1v1h-1zM775 839h1v1h-1zM797 839h1v1h-1zM820 839h1v1h-1zM843 839h1v1h-1zM865 839h1v1h-1zM888 839h1v1h-1zM910 839h1v1h-1zM933 839h1v1h-1zM955 839h1v1h-1zM978 839h1v1h-1zM1000 839h1v1h-1zM1023 839h1v1h-1zM1045 839h1v1h-1zM1068 839h1v1h-1zM1090 839h1v1h-1zM1113 839h1v1h-1zM1135 839h1v1h-1zM1158 839h1v1h-1zM1180 839h1v1h-1zM1203 839h1v1h-1zM1225 839h1v1h-1zM1248 839h1v1h-1zM1270 839h1v1h-1zM1293 839h1v1h-1zM1315 839h1v1h-1zM1338 839h1v1h-1zM1360 839h1v1h-1zM1383 839h1v1h-1zM1405 839h1v1h-1zM1428 839h1v1h-1zM1450 839h1v1h-1zM1473 839h1v1h-1zM1495 839h1v1h-1zM1518 839h1v1h-1zM1540 839h1v1h-1zM1563 839h1v1h-1zM1586 839h1v1h-1zM1608 839h1v1h-1zM1631 839h1v1h-1zM1653 839h1v1h-1zM1676 839h1v1h-1zM1698 839h1v1h-1zM1721 839h1v1h-1zM1743 839h1v1h-1zM1766 839h1v1h-1zM1788 839h1v1h-1zM1811 839h1v1h-1zM1833 839h1v1h-1zM1856 839h1v1h-1zM1878 839h1v1h-1zM1901 839h1v1h-1zM77 861h1v1h-1zM122 861h1v1h-1zM167 861h1v1h-1zM212 861h1v1h-1zM257 861h1v1h-1zM302 861h1v1h-1zM347 861h1v1h-1zM392 861h1v1h-1zM437 861h1v1h-1zM482 861h1v1h-1zM527 861h1v1h-1zM572 861h1v1h-1zM617 861h1v1h-1zM662 861h1v1h-1zM707 861h1v1h-1zM752 861h1v1h-1zM797 861h1v1h-1zM843 861h1v1h-1zM888 861h1v1h-1zM933 861h1v1h-1zM978 861h1v1h-1zM1023 861h1v1h-1zM1068 861h1v1h-1zM1113 861h1v1h-1zM1158 861h1v1h-1zM1203 861h1v1h-1zM1248 861h1v1h-1zM1293 861h1v1h-1zM1338 861h1v1h-1zM1383 861h1v1h-1zM1428 861h1v1h-1zM1473 861h1v1h-1zM1518 861h1v1h-1zM1563 861h1v1h-1zM1608 861h1v1h-1zM1653 861h1v1h-1zM1698 861h1v1h-1zM1743 861h1v1h-1zM1788 861h1v1h-1zM1833 861h1v1h-1zM1878 861h1v1h-1z"/></svg>
<div class="a" style="left:73px;top:9px;width:43px;height:38px;background:#1e2330;border-radius:4px"></div>
<div class="a" style="left:1241px;top:8px;width:308px;height:42px;background:#1c212b;border-radius:4px"></div>
<div class="a" style="left:104px;top:85px;width:97px;height:37px;background:#1f8a47;border-radius:3px"></div>
<div class="a" style="left:105px;top:187px;width:126px;height:28px;background:#22262f;border-radius:3px"></div>
<div class="a" style="left:1597px;top:81px;width:1px;height:31px;background:#0e1218"></div>
<div class="a" style="left:1718px;top:82px;width:1px;height:31px;background:#0e1218"></div>
<div class="a" style="left:1725px;top:82px;width:66px;height:29px;background:#0c1118;border:1.5px solid #22a6b0;border-radius:3px"></div>
<div class="a" style="left:1797px;top:82px;width:74px;height:29px;background:#393e46;border-radius:3px"></div>
<div class="a" style="left:1024px;top:140px;width:45px;height:39px;background:#343a46;border-radius:3px"></div>
<div class="a" style="left:1071px;top:140px;width:44px;height:39px;background:#343a46;border-radius:3px"></div>
<div class="a" style="left:1122px;top:140px;width:42px;height:39px;background:#343a46;border-radius:3px"></div>
<div class="a" style="left:1167px;top:140px;width:41px;height:39px;background:#2e333e;border-radius:3px"></div>
<div class="a" style="left:1211px;top:140px;width:44px;height:39px;background:#343a46;border-radius:3px"></div>
<div class="a" style="left:1258px;top:140px;width:44px;height:39px;background:#343a46;border-radius:3px"></div>
<div class="a" style="left:1305px;top:140px;width:41px;height:39px;background:#343a46;border-radius:3px"></div>
<div class="a" style="left:1348px;top:140px;width:92px;height:39px;background:#343a46;border-radius:3px"></div>
<div class="a" style="left:1443px;top:140px;width:44px;height:39px;background:#343a46;border-radius:3px"></div>
<div class="a" style="left:1489px;top:140px;width:45px;height:39px;background:#343a46;border-radius:3px"></div>
<div class="a" style="left:1536px;top:140px;width:193px;height:39px;background:#343a46;border-radius:3px"></div>
<div class="a" style="left:1731px;top:140px;width:169px;height:39px;background:#22a6b0;border-radius:3px"></div>
<svg width="1920" height="862">
<rect x="22" y="16" width="25" height="25" rx="4" fill="none" stroke="#b4b8be" stroke-width="2"/>
<g fill="none" stroke="#e6e7ea" stroke-width="1.7" stroke-linecap="round"><path d="M26.30 28.88 A7.9 7.9 0 0 1 33.51 20.73"/><path d="M37.91 21.62 A7.9 7.9 0 0 1 40.07 33.89"/><path d="M37.16 35.92 A7.9 7.9 0 0 1 27.22 32.31"/></g>
<g fill="#e6e7ea"><path d="M33 18.3 L36.6 20.7 L33.2 23.2 Z"/><path d="M42.8 31.2 L40.6 35.2 L38.4 31.8 Z"/><path d="M25.2 31.6 L29.4 31.2 L27.9 35.3 Z"/></g>
<path d="M37.13 27.58 L38.52 27.74 L38.52 29.46 L37.13 29.62 L36.99 29.95 L37.86 31.04 L36.64 32.26 L35.55 31.39 L35.22 31.53 L35.06 32.92 L33.34 32.92 L33.18 31.53 L32.85 31.39 L31.76 32.26 L30.54 31.04 L31.41 29.95 L31.27 29.62 L29.88 29.46 L29.88 27.74 L31.27 27.58 L31.41 27.25 L30.54 26.16 L31.76 24.94 L32.85 25.81 L33.18 25.67 L33.34 24.28 L35.06 24.28 L35.22 25.67 L35.55 25.81 L36.64 24.94 L37.86 26.16 L36.99 27.25 Z" fill="#e6e7ea"/><circle cx="34.2" cy="28.6" r="1.3" fill="#343a46"/>
<path d="M88 18.8 L99 27.5 L88 36.2 Z" fill="#ffffff"/>
<path d="M1193.6 38.3 A12.2 12.2 0 1 0 1184.5 34.4 L1188 31.2" fill="none" stroke="#5db31b" stroke-width="1.4"/>
<g fill="#5db31b" transform="translate(1192.6 28.2) rotate(45) scale(1.12)"><path d="M-5 -2.2 H5 V0.8 Q5 6.2 0 6.2 Q-5 6.2 -5 0.8 Z"/><rect x="-3.6" y="-7.4" width="2.6" height="5.6" rx="1.3"/><rect x="1" y="-7.4" width="2.6" height="5.6" rx="1.3"/></g>
<circle cx="1260" cy="28" r="6" fill="none" stroke="#ffffff" stroke-width="1.7"/><path d="M1264.3 32.5 L1268 36.3" stroke="#ffffff" stroke-width="1.8"/>
<path d="M1611.51 24.47 L1614.35 25.51 L1614.35 29.09 L1611.51 30.13 L1611.19 30.89 L1612.47 33.64 L1609.94 36.17 L1607.19 34.89 L1606.43 35.21 L1605.39 38.05 L1601.81 38.05 L1600.77 35.21 L1600.01 34.89 L1597.26 36.17 L1594.73 33.64 L1596.01 30.89 L1595.69 30.13 L1592.85 29.09 L1592.85 25.51 L1595.69 24.47 L1596.01 23.71 L1594.73 20.96 L1597.26 18.43 L1600.01 19.71 L1600.77 19.39 L1601.81 16.55 L1605.39 16.55 L1606.43 19.39 L1607.19 19.71 L1609.94 18.43 L1612.47 20.96 L1611.19 23.71 Z" fill="none" stroke="#ffffff" stroke-width="1.6" stroke-linejoin="round"/><circle cx="1603.6" cy="27.3" r="3.7" fill="none" stroke="#ffffff" stroke-width="1.6"/>
<g fill="#ffffff"><rect x="1647.1" y="25.1" width="7.1" height="6.6"/><rect x="1662.7" y="18.4" width="7.1" height="5.7"/><rect x="1662.7" y="25.1" width="7.1" height="5.7"/><rect x="1662.7" y="32.2" width="7.1" height="5.7"/></g><path d="M1654 28.3 H1658 M1658 21.5 V35 M1658 21.5 H1663 M1658 35 H1663" fill="none" stroke="#ffffff" stroke-width="1.1"/>
<path d="M1704 33.6 Q1707.5 30 1707 24 Q1707 17.5 1713.3 17.2 Q1719.6 17.5 1719.6 24 Q1719.3 30 1723 33.6 Z" fill="none" stroke="#ffffff" stroke-width="1.5" stroke-linejoin="round"/><path d="M1703 34 H1724" stroke="#ffffff" stroke-width="1.6"/><circle cx="1713.2" cy="36.8" r="2" fill="none" stroke="#ffffff" stroke-width="1.3"/>
<rect x="1717" y="8" width="19" height="19" rx="3" fill="#dc3a3f"/>
<rect x="1760" y="18.5" width="17" height="21" rx="2" fill="none" stroke="#ffffff" stroke-width="1.5"/><rect x="1764.8" y="17" width="7.5" height="4" rx="1" fill="#343a46" stroke="#ffffff" stroke-width="1.4"/><path d="M1764.2 29.4 L1767.5 32.3 L1773.5 26.3" fill="none" stroke="#ffffff" stroke-width="1.8"/>
<rect x="1772.2" y="8" width="18.8" height="19" rx="3" fill="#dc3a3f"/>
<path d="M1817.5 35.2 H1814 Q1812.6 35.2 1812.6 33.8 V18.4 Q1812.6 17 1814 17 H1838.5 Q1839.9 17 1839.9 18.4 V33.8 Q1839.9 35.2 1838.5 35.2 H1835" fill="none" stroke="#ffffff" stroke-width="1.5"/><rect x="1812.6" y="17" width="27.3" height="6.3" fill="#ffffff"/><g fill="#343a46"><circle cx="1816.4" cy="20.3" r="0.8"/><circle cx="1819.5" cy="20.3" r="0.8"/><circle cx="1822.6" cy="20.3" r="0.8"/></g>
<path d="M1830.53 32.60 L1832.69 33.00 L1832.69 35.40 L1830.53 35.80 L1830.33 36.27 L1831.58 38.09 L1829.89 39.78 L1828.07 38.53 L1827.60 38.73 L1827.20 40.89 L1824.80 40.89 L1824.40 38.73 L1823.93 38.53 L1822.11 39.78 L1820.42 38.09 L1821.67 36.27 L1821.47 35.80 L1819.31 35.40 L1819.31 33.00 L1821.47 32.60 L1821.67 32.13 L1820.42 30.31 L1822.11 28.62 L1823.93 29.87 L1824.40 29.67 L1824.80 27.51 L1827.20 27.51 L1827.60 29.67 L1828.07 29.87 L1829.89 28.62 L1831.58 30.31 L1830.33 32.13 Z" fill="#ffffff"/><circle cx="1826" cy="34.2" r="2" fill="#343a46"/>
<rect x="1830" y="8.6" width="16.2" height="17.5" rx="2.5" fill="#dc3a3f" stroke="#ffffff" stroke-width="1"/>
<g fill="#d9d9d9"><ellipse cx="1884.9" cy="25.2" rx="4" ry="5"/><path d="M1881.5 29.5 Q1882.5 32 1880 33.2 Q1876 34.5 1875.8 37.5 Q1876 38.6 1877.5 38.6 H1892.3 Q1894 38.6 1894 37.3 Q1893.6 34.5 1889.8 33.2 Q1887.3 32 1888.3 29.5 Z"/></g>
<path d="M115.4 102.5 L121.2 107.8 L129.2 98.9" fill="none" stroke="#ffffff" stroke-width="1.6"/>
<circle cx="1701" cy="98.2" r="8.3" fill="none" stroke="#22a6b0" stroke-width="1.6"/><rect x="1700" y="96" width="2.2" height="6.8" fill="#22a6b0"/><circle cx="1701.1" cy="93.3" r="1.3" fill="#22a6b0"/><path d="M1698.8 102.8 H1703.4 M1699.2 96.1 H1701" stroke="#22a6b0" stroke-width="1"/>
<g fill="#8d9197"><circle cx="1890" cy="91.3" r="3.2"/><circle cx="1884.2" cy="92.5" r="2.5"/><circle cx="1895.8" cy="92.5" r="2.5"/><path d="M1884.6 104.3 V99.8 Q1884.6 95.8 1890 95.8 Q1895.4 95.8 1895.4 99.8 V104.3 Z"/><path d="M1881 101.8 V98.8 Q1881.2 95.8 1884.2 95.8 Q1885.6 95.8 1886.3 96.4 Q1883.6 97.8 1883.5 101.8 Z"/><path d="M1899 101.8 V98.8 Q1898.8 95.8 1895.8 95.8 Q1894.4 95.8 1893.7 96.4 Q1896.4 97.8 1896.5 101.8 Z"/></g>
<g fill="none" stroke="#ffffff" stroke-width="1.5"><rect x="1038.6" y="151.6" width="15.3" height="14.6" rx="1.5"/><rect x="1042.5" y="154.6" width="7.8" height="2.8" stroke-width="1.2"/><rect x="1042.5" y="160.6" width="7.8" height="2.8" stroke-width="1.2"/><path d="M1046.3 157.8 V160"/><path d="M1085.5 151.6 H1100.1 V161.8 L1095.5 166.2 H1085.5 Z"/><path d="M1100 161.6 Q1096 161.5 1095.6 166" stroke-width="1.1"/></g>
<path d="M1136.5 156.8 A5.7 5.7 0 1 1 1138.2 162.3" fill="none" stroke="#ffffff" stroke-width="2.4"/><path d="M1134.9 151.8 L1140.8 157.6 L1134.9 157.6 Z" fill="#ffffff"/>
<path d="M1192.3 155.7 A5.9 5.9 0 1 0 1191.6 162.4" fill="none" stroke="#c4c6c9" stroke-width="3"/><path d="M1194.2 151.7 V157.6 H1188.3 Z" fill="#c4c6c9"/>
<g fill="none" stroke="#ffffff" stroke-width="1.4"><rect x="1229.1" y="154.5" width="3.2" height="9"/><rect x="1234.2" y="156.5" width="3.2" height="4.9"/><path d="M1223.8 158.8 H1228.4 M1238 158.8 H1241.1"/><rect x="1274.7" y="155.6" width="9.6" height="2.9"/><rect x="1276.8" y="160.6" width="5.5" height="3"/><path d="M1279.5 150.9 V155 M1279.5 164 V166.9"/></g>
<path d="M1318 150.8 L1331.8 158.2 L1318 165.6 Z" fill="#ffffff"/>
<path d="M1416 157 H1426.2 L1421.1 162.3 Z" fill="#ffffff"/><path d="M1706 157 H1716.2 L1711.1 162.3 Z" fill="#ffffff"/>
<g fill="none" stroke="#ffffff" stroke-width="1.5"><path d="M1464.2 156 V163"/><path d="M1456.5 160.5 V166 H1471.9 V160.5"/><path d="M1503 154 H1519" stroke-width="2"/><path d="M1508 153 V151.6 H1514.3 V153"/><path d="M1505.3 156.3 V164.5 Q1505.3 166.2 1507 166.2 H1515.3 Q1517 166.2 1517 164.5 V156.3"/></g><path d="M1458.7 156.2 L1464.2 150.8 L1469.7 156.2 Z" fill="#ffffff"/>
<g fill="none" stroke="#ffffff" stroke-width="1.3"><circle cx="1552.4" cy="162.4" r="2"/><circle cx="1563.5" cy="162.4" r="2"/><circle cx="1563.5" cy="155.3" r="2"/><path d="M1554.4 162.4 H1561.5"/><path d="M1561.5 155.3 H1553 V160" stroke-dasharray="1.4 1"/></g>
<path d="M1744.9 158.4 L1750.4 163.5 L1760.9 153.7" fill="none" stroke="#ffffff" stroke-width="1.7"/>
<g fill="none" stroke="#c3cddb" stroke-width="1.5" stroke-linejoin="round"><rect x="26" y="93.9" width="7.1" height="9.2" rx="1.3"/><rect x="36.7" y="93.9" width="7.1" height="5.7" rx="1.3"/><rect x="26" y="106.6" width="7.1" height="4.7" rx="1.3"/><rect x="36.7" y="103.4" width="7.1" height="7.9" rx="1.3"/><circle cx="35" cy="165.5" r="2.1"/><circle cx="29" cy="167.5" r="1.7"/><circle cx="40.5" cy="167.5" r="1.7"/><path d="M30.5 173.5 Q31 169.8 35 169.6 Q39 169.8 39.5 173.5 Z"/><path d="M25.8 173.7 Q26 170.5 29 170.3 Q30.6 170.3 31.6 171 M44.2 173.7 Q44 170.5 41 170.3 Q39.4 170.3 38.4 171 M25.8 173.7 H44.2"/><path d="M25.5 226 L32.5 233 M36.6 237.3 L43.3 243.5 M26 243.7 L43.8 226 M37 225.8 H43.8 V232.6 M43.5 236.5 V243.5 H36.5"/><path d="M40.66 293.25 A9.2 9.2 0 0 1 33.40 309.56 M29.34 307.75 A9.2 9.2 0 0 1 36.91 291.50"/></g><path d="M40.3 291.5 L31 301.6 L34.9 301.8 L29.3 309.6 L39.2 299.3 L35.4 299.1 Z" fill="#c3cddb"/><g fill="none" stroke="#c3cddb" stroke-width="1.5" stroke-linejoin="round"><rect x="25.8" y="362.8" width="18.4" height="12.2" rx="1.2"/><path d="M30.3 374.5 V363 M39.6 374.5 V363 M30.3 362.8 V360.5 Q30.3 358.5 32.3 358.5 H37.6 Q39.6 358.5 39.6 360.5 V362.8"/><path d="M25.8 426.5 V440.5 H44.5 M28.6 440 L32 433 M27.2 433.2 H33.5 L37.5 436.5 L44.3 432.5 M33.3 430.5 L35 427.6 L38.5 433 L43 426.6"/></g><g fill="#c3cddb"><rect x="25.2" y="490.3" width="8.8" height="8.5" rx="1.4"/><circle cx="40.2" cy="494.5" r="4.5"/></g><g fill="none" stroke="#c3cddb" stroke-width="1.5"><rect x="25.9" y="501.6" width="7.4" height="7" rx="1.4"/><rect x="36.4" y="501.6" width="7.4" height="7" rx="1.4"/></g><g fill="none" stroke="#c3cddb" stroke-width="1.5" stroke-linejoin="round"><path d="M34.8 556.5 L43.5 561.5 V570.5 L34.8 575.2 L26.2 570.5 V561.5 Z M34.8 556.5 V564 M26.2 570.5 L33 566.8 M43.5 570.5 L36.8 566.8"/></g><path d="M34.8 562.8 L38.2 564.8 V568.6 L34.8 570.5 L31.4 568.6 V564.8 Z" fill="#c3cddb"/><g fill="none" stroke="#c3cddb" stroke-width="1.5"><circle cx="34.8" cy="631.6" r="9.1"/><circle cx="34.8" cy="631.6" r="3.6"/><path d="M33.2 622.8 V628.2 M36.4 622.8 V628.2 M33.2 635 V640.4 M36.4 635 V640.4 M26 630 H31.4 M26 633.2 H31.4 M38.2 630 H43.6 M38.2 633.2 H43.6"/></g><g fill="none" stroke="#c3cddb" stroke-width="1.5"><circle cx="31.8" cy="694.7" r="3.2"/><circle cx="39.5" cy="696.4" r="2.5"/><path d="M25.5 704.3 Q26.2 698.8 31.8 698.7 Q37.2 698.8 37.8 704.3 Z M36.5 700.4 Q38 699.5 39.5 699.6 Q44 699.8 44.5 704.3 H37.8"/></g><g fill="none" stroke="#e6e9ee" stroke-width="1.5"><path d="M26.5 770.6 H43 M31.4 770.4 V767.5 H38.1 V770.4 M28 771 V784 Q28 786 30 786 H39.6 Q41.6 786 41.6 784 V771"/><path d="M32 777.5 A3 3 0 0 1 37.6 776.8 M37.7 780 A3 3 0 0 1 32.1 780.6" stroke-width="1.3"/></g>
<g fill="none" stroke="#7d8188" stroke-width="1.6"><path d="M1247.8 244.2 Q1247.6 241 1246 239.5 Q1244.6 237.8 1244.8 235.7 Q1245.5 233.3 1250.5 233.3 Q1255.5 233.3 1256.3 235.7 Q1256.5 237.8 1255.1 239.5 Q1253.4 241 1253.3 244.2 Z"/></g><path d="M1247.8 245 H1253.3 V248.5 Q1252.5 250.3 1250.5 250.3 Q1248.5 250.3 1247.8 248.5 Z" fill="#7d8188"/>
<rect x="1865.2" y="780" width="26.8" height="23.7" rx="3" fill="#888888"/><rect x="1865.2" y="831.3" width="26.8" height="23.4" rx="3" fill="#888888"/><rect x="1877" y="803" width="2.6" height="29" fill="#888888"/><path d="M1870.9 791 H1884 M1877.4 784.2 V797.8" stroke="#555555" stroke-width="1.3"/><path d="M1869.7 842.3 H1885.3" stroke="#555555" stroke-width="2"/>
</svg>
<svg width="1920" height="862" font-family="Liberation Sans">
<text x="125.85" y="33.30" font-size="17.70" fill="#8fa0b4" textLength="82.19" lengthAdjust="spacing">Playbooks</text>
<text x="215.50" y="33.30" font-size="17.70" fill="#8fa0b4" textLength="6.10" lengthAdjust="spacing">/</text>
<text x="229.70" y="33.30" font-size="17.70" fill="#8fa0b4" textLength="90.44" lengthAdjust="spacing">Collections</text>
<text x="328.00" y="33.30" font-size="17.70" fill="#8fa0b4" textLength="6.00" lengthAdjust="spacing">/</text>
<text x="341.35" y="33.30" font-size="17.70" fill="#8fa0b4" textLength="47.90" lengthAdjust="spacing">Demo</text>
<text x="396.60" y="33.30" font-size="17.70" fill="#8fa0b4" textLength="6.10" lengthAdjust="spacing">/</text>
<text x="415.80" y="33.30" font-size="17.70" fill="#d8dce2" textLength="156.73" lengthAdjust="spacing">Test - Manual Input</text>
<text x="1292.14" y="35.50" font-size="19.00" fill="#6b7079" textLength="57.50" lengthAdjust="spacing" stroke="#6b7079" stroke-width="0.5">Search</text>
<text x="137.46" y="107.50" font-size="18.00" fill="#ffffff" textLength="50.83" lengthAdjust="spacing">Active</text>
<text x="212.33" y="112.30" font-size="30.00" fill="#ffffff" textLength="259.89" lengthAdjust="spacing">Test - Manual Input</text>
<text x="104.53" y="147.00" font-size="16.00" font-weight="bold" fill="#a9b1ad" textLength="87.46" lengthAdjust="spacing">Description</text>
<rect x="202" y="139.7" width="5.2" height="2" fill="#e8eaea"/><rect x="209.8" y="139.7" width="5.2" height="2" fill="#e8eaea"/>
<text x="104.63" y="170.00" font-size="14.50" font-weight="bold" fill="#b0b6b8" textLength="346.67" lengthAdjust="spacing">Last Modified 04/01/2022 03:50 PM by CS Admin</text>
<text x="118.27" y="205.00" font-size="15.00" fill="#7d838b" textLength="80.27" lengthAdjust="spacing">+ Add Tags</text>
<text x="1380.44" y="102.20" font-size="19.00" fill="#9a9fa6" textLength="203.00" lengthAdjust="spacing">Running In <tspan fill="#2ab3c1">INFO</tspan> Mode</text>
<text x="1611.22" y="103.00" font-size="18.80" fill="#8e9298" textLength="75.22" lengthAdjust="spacing">Visibility</text>
<text x="1732.33" y="101.10" font-size="16.70" fill="#25b0bc" textLength="49.71" lengthAdjust="spacing">Public</text>
<text x="1804.13" y="101.10" font-size="16.70" fill="#c0c3c7" textLength="58.11" lengthAdjust="spacing">Private</text>
<text x="1361.62" y="163.90" font-size="17.00" fill="#ffffff" textLength="41.30" lengthAdjust="spacing">Tools</text>
<text x="1578.23" y="164.30" font-size="17.00" fill="#ffffff" textLength="103.38" lengthAdjust="spacing">Save Version</text>
<text x="1769.23" y="164.30" font-size="17.00" fill="#ffffff" textLength="116.15" lengthAdjust="spacing">Save Playbook</text>
<text x="1717.54" y="20.90" font-size="13.90" fill="#ffffff" textLength="16.97" lengthAdjust="spacing">16</text>
<text x="1777.14" y="20.90" font-size="13.90" fill="#ffffff" textLength="7.14" lengthAdjust="spacing">1</text>
<rect x="1836.4" y="13.2" width="2.6" height="6.8" fill="#ffffff"/><rect x="1836.4" y="21.2" width="2.6" height="2.2" fill="#ffffff"/>
<text x="24.91" y="847.80" font-size="19.00" fill="#a6aab0" textLength="19.84" lengthAdjust="spacing">@</text>
<text x="1263.66" y="246.60" font-size="15.60" font-weight="bold" fill="#7d8188" textLength="636.11" lengthAdjust="spacing">Use Ctrl(⌘ Cmd) to select step(s) and Ctrl+C/V (⌘ Cmd + C/V) to Copy/Paste.</text>
</svg>
<svg width="1920" height="862" font-family="Liberation Sans">
<circle cx="429" cy="309.8" r="11.8" fill="#27313d"/>
<circle cx="562" cy="379" r="11.8" fill="#27313d"/>
<circle cx="713.3" cy="415.4" r="11.8" fill="#27313d"/>
<circle cx="690.4" cy="492.2" r="11.8" fill="#27313d"/>
<circle cx="842" cy="516" r="11.8" fill="#27313d"/>
<circle cx="842" cy="540.7" r="11.8" fill="#27313d"/>
<circle cx="690.5" cy="565" r="11.8" fill="#27313d"/>
<circle cx="963.3" cy="310" r="11.8" fill="#27313d"/>
<circle cx="683" cy="638" r="11.8" fill="#27313d"/>
<circle cx="986.1" cy="668.2" r="11.8" fill="#27313d"/>
<g fill="none" stroke="#a0a0a0" stroke-width="3">
<path d="M429 309.5 H490 Q496 309.5 496 315.5 V373 Q496 379 502 379 H548"/>
<path d="M713.4 416 V447.5 Q713.4 453.5 707.4 453.5 H696.4 Q690.4 453.5 690.4 459.5 V478"/>
<path d="M690.4 565 V597.3 Q690.4 600.8 686.9 600.8 H686.5 Q683 600.8 683 604.3 V624"/>
<path d="M842 516.1 H897.8 Q903.8 516.1 903.8 510.1 V316 Q903.8 310 909.8 310 H949"/>
<path d="M842 541 H859"/>
<path d="M914.5 581 V662.2 Q914.5 668.2 920.5 668.2 H972"/>
</g>
<g fill="#a0a0a0">
<path d="M562 379 L546.3 373.6 L546.3 384.4 Z"/>
<path d="M690.4 492 L685 476.6 L695.8 476.6 Z"/>
<path d="M683 638 L677.4 622.7 L688.6 622.7 Z"/>
<path d="M963.3 310 L948.7 304.6 L948.7 315.4 Z"/>
<path d="M986.1 668.2 L970.7 662.8 L970.7 673.6 Z"/>
</g>
<rect x="848" y="457.7" width="109" height="40.2" fill="#383636" stroke="#8c8c8c" stroke-width="1.5"/>
<rect x="858.9" y="520.9" width="108.7" height="59.8" fill="#383636" stroke="#8c8c8c" stroke-width="1.5"/>
<text x="854.49" y="470.60" font-size="14.50" font-style="italic" fill="#c4c4c4" textLength="74.20" lengthAdjust="spacing">Yes - Block</text>
<text x="855.34" y="490.50" font-size="14.50" font-style="italic" fill="#c4c4c4" textLength="87.67" lengthAdjust="spacing">the Indicator</text>
<text x="865.75" y="533.40" font-size="14.50" font-style="italic" fill="#c4c4c4" textLength="80.24" lengthAdjust="spacing">No - Do not</text>
<text x="865.75" y="553.20" font-size="14.50" font-style="italic" fill="#c4c4c4" textLength="64.98" lengthAdjust="spacing">Block the</text>
<text x="866.13" y="573.30" font-size="14.50" font-style="italic" fill="#c4c4c4" textLength="61.38" lengthAdjust="spacing">Indicator</text>
</svg>
<div class="a" style="left:125.9px;top:273.8px;width:303.4px;height:73px;background:#222a36;border-radius:3px"></div>
<div class="a" style="left:562px;top:342.8px;width:303.7px;height:73px;background:#222a36;border-radius:3px"></div>
<div class="a" style="left:538.6px;top:492.2px;width:303.4px;height:73px;background:#222a36;border-radius:3px"></div>
<div class="a" style="left:963.1px;top:273.8px;width:304.9px;height:73px;background:#222a36;border-radius:3px"></div>
<div class="a" style="left:531.8px;top:638px;width:303.4px;height:73px;background:#222a36;border-radius:3px"></div>
<div class="a" style="left:986px;top:632.2px;width:303.4px;height:73px;background:#222a36;border-radius:3px"></div>
<svg width="1920" height="862" font-family="Liberation Sans">
<circle cx="155.9" cy="309.0" r="18.4" fill="#17cdaa"/>
<g transform="translate(155.9 309.0)"><circle cx="-3.3" cy="-2.5" r="4.3" fill="none" stroke="#000" stroke-width="1.2"/><path d="M-2.5 -5.5 L3.6 -7.4 L7.8 -2" fill="none" stroke="#000" stroke-width="0.8"/><circle cx="3.6" cy="-7.4" r="1.2" fill="#000"/><circle cx="7.8" cy="-2" r="1.1" fill="#000"/><path d="M-4.5 -1 L-3.5 -1 L-3.2 3.5 L-0.5 3.8 Q1.2 4.2 1 6 L0.6 9.5 Q0 10.2 -1.5 10.2 L-3.8 10.2 Q-4.8 10 -5.5 9 L-7.5 5 Q-7.6 4.2 -6.8 4.3 L-5 5.8 Z" fill="#000"/></g>
<text x="186.31" y="306.20" font-size="16.80" font-weight="bold" fill="#f2f2f2" textLength="140.19" lengthAdjust="spacing">Test Manual Input</text>
<text x="185.87" y="325.10" font-size="12.50" fill="#8d9196" textLength="57.24" lengthAdjust="spacing">MANUAL</text>
<circle cx="592.0" cy="378.0" r="18.4" fill="#f6ab22"/>
<g transform="translate(592.0 378.0)"><path d="M7.5 -4.5 V-9 H-9.6 V8.4 H-2" fill="none" stroke="#000" stroke-width="1.4"/><path d="M-6.8 -5.4 H4.5 M-6.8 -2.5 H-1.5 M-6.8 -0.4 H-4.1 M-6.8 2.6 H-5" stroke="#000" stroke-width="1.5"/><circle cx="3.3" cy="2.9" r="5.3" fill="none" stroke="#000" stroke-width="1.3"/><circle cx="2.8" cy="2.3" r="1.7" fill="none" stroke="#000" stroke-width="1.1"/><path d="M4 3.6 L5.6 5.3" stroke="#000" stroke-width="1.2"/></g>
<text x="621.48" y="375.20" font-size="16.80" font-weight="bold" fill="#f2f2f2" textLength="208.51" lengthAdjust="spacing">Find Associated Indicators</text>
<text x="621.97" y="394.10" font-size="12.50" fill="#8d9196" textLength="98.80" lengthAdjust="spacing">FIND RECORDS</text>
<circle cx="568.6" cy="527.4" r="18.4" fill="#55b405"/>
<g transform="translate(568.6 527.4)"><path d="M-8.4 6.4 L-7.3 2.2 L3.8 -8.6 Q5.2 -9.6 6.4 -8.4 Q7.4 -7.2 6.3 -5.9 L-4.6 5.3 Z M2.2 -7 L5 -4.3" fill="none" stroke="#000" stroke-width="1.1" stroke-linejoin="round"/><path d="M-9.1 8.2 H9.2" stroke="#000" stroke-width="1.3"/></g>
<text x="598.08" y="524.60" font-size="16.80" font-weight="bold" fill="#f2f2f2" textLength="141.73" lengthAdjust="spacing">Manual Input Test</text>
<text x="598.57" y="543.50" font-size="12.50" fill="#8d9196" textLength="101.71" lengthAdjust="spacing">MANUAL INPUT</text>
<circle cx="993.1" cy="309.0" r="18.4" fill="#f6ab22"/>
<g transform="translate(993.1 309.0)"><path d="M7.5 -4.5 V-9 H-9.6 V8.4 H-2" fill="none" stroke="#000" stroke-width="1.4"/><path d="M-6.8 -5.4 H4.5 M-6.8 -2.5 H-1.5 M-6.8 -0.4 H-4.1 M-6.8 2.6 H-5" stroke="#000" stroke-width="1.5"/><circle cx="3.6" cy="4" r="5.3" fill="none" stroke="#000" stroke-width="1.3"/><path d="M1 7 L6.5 1.2" stroke="#000" stroke-width="1.6"/></g>
<text x="1022.58" y="306.20" font-size="16.80" font-weight="bold" fill="#f2f2f2" textLength="120.58" lengthAdjust="spacing">Block Indicator</text>
<text x="1023.14" y="325.10" font-size="12.50" fill="#8d9196" textLength="112.66" lengthAdjust="spacing">UPDATE RECORD</text>
<circle cx="561.8" cy="673.2" r="18.4" fill="#27a083"/>
<g transform="translate(561.8 673.2)"><rect x="-8.6" y="-4.5" width="17.8" height="11.1" rx="1" fill="none" stroke="#000" stroke-width="1.5"/><path d="M-8 -3.8 L0 2.5 L8.5 -3.8" fill="none" stroke="#000" stroke-width="1.3"/></g>
<text x="591.28" y="670.40" font-size="16.80" font-weight="bold" fill="#f2f2f2" textLength="128.11" lengthAdjust="spacing">Escalation Email</text>
<text x="592.23" y="689.30" font-size="12.50" fill="#8d9196" textLength="79.98" lengthAdjust="spacing">SEND EMAIL</text>
<circle cx="1016.0" cy="667.4" r="18.4" fill="#27a083"/>
<g transform="translate(1016.0 667.4)"><rect x="-8.6" y="-4.5" width="17.8" height="11.1" rx="1" fill="none" stroke="#000" stroke-width="1.5"/><path d="M-8 -3.8 L0 2.5 L8.5 -3.8" fill="none" stroke="#000" stroke-width="1.3"/></g>
<text x="1046.12" y="664.60" font-size="16.80" font-weight="bold" fill="#f2f2f2" textLength="181.93" lengthAdjust="spacing">Sent Email Notification</text>
<text x="1046.43" y="683.50" font-size="12.50" fill="#8d9196" textLength="79.98" lengthAdjust="spacing">SEND EMAIL</text>
</svg>
</body></html>
